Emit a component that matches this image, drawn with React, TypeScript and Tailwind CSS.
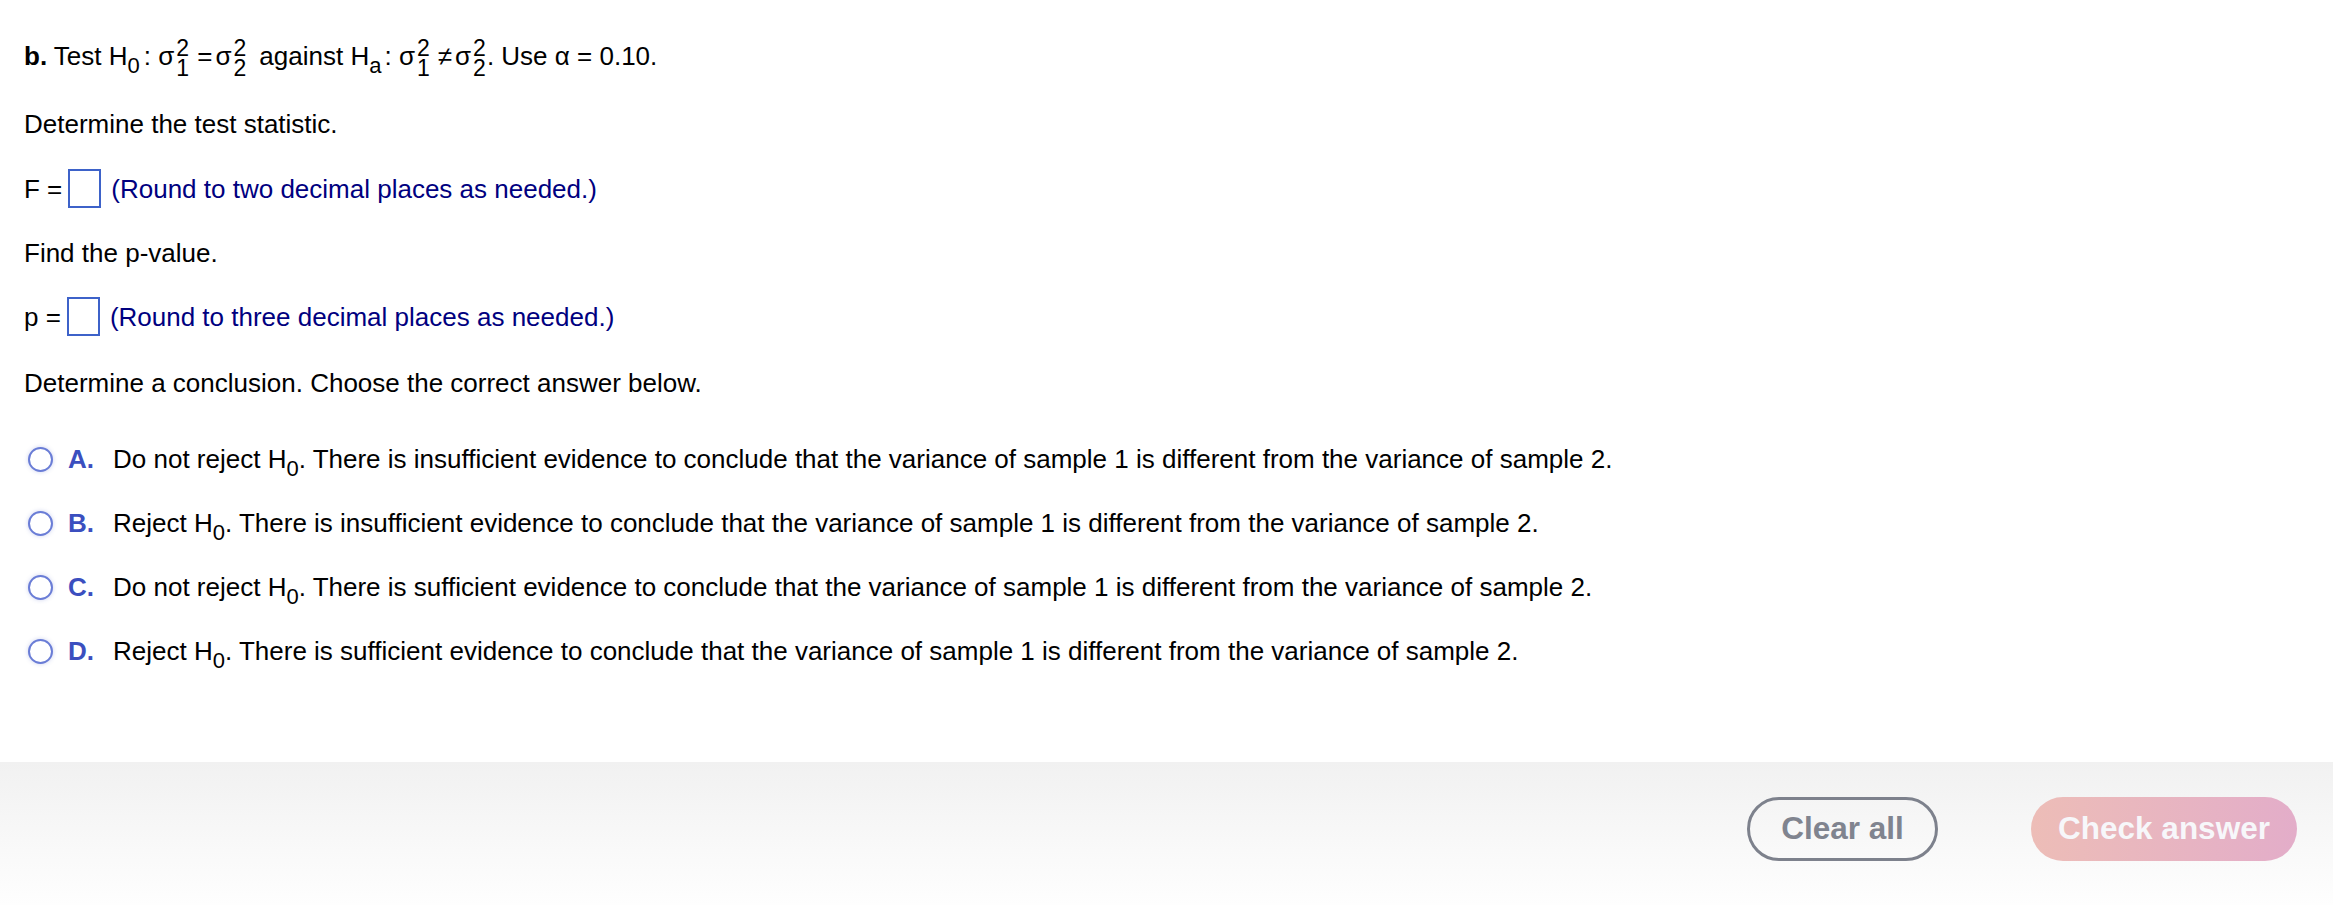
import React from "react";

const options = [
  { key: "A", verdict: "Do not reject", evidence: "insufficient" },
  { key: "B", verdict: "Reject", evidence: "insufficient" },
  { key: "C", verdict: "Do not reject", evidence: "sufficient" },
  { key: "D", verdict: "Reject", evidence: "sufficient" },
];

function Sub({ children }: { children: React.ReactNode }) {
  return <span className="text-[22px] align-[-8px] leading-none">{children}</span>;
}

// superscript stacked over subscript, like sigma squared sub 1
function Stack({ sup, sub }: { sup: string; sub: string }) {
  return (
    <span className="inline-flex flex-col align-middle text-[23px] leading-[20px] ml-[2px] mr-[1px]">
      <span>{sup}</span>
      <span>{sub}</span>
    </span>
  );
}

function AnswerBox() {
  return (
    <span className="inline-block w-[33px] h-[39px] border-2 border-[#3d62c9] align-[-10px] ml-[6px] mr-[10px] bg-white" />
  );
}

function Radio() {
  return (
    <span className="block w-[25px] h-[25px] rounded-full border-[2.5px] border-[#6a7dd6] bg-white shadow-[0_0_4px_rgba(60,80,190,0.25)]" />
  );
}

export default function App() {
  return (
    <div
      className="flex flex-col h-[905px] bg-white text-black"
      style={{ fontFamily: '"Liberation Sans", Arial, sans-serif' }}
    >
      <div className="flex-1 pl-[24px] pt-[24px] text-[26px]">
        <div className="leading-[64px] whitespace-nowrap">
          <b>b.</b> Test H<Sub>0</Sub>
          <span className="ml-[4px]">: σ</span>
          <Stack sup="2" sub="1" /> =<span className="ml-[3px]">σ</span>
          <Stack sup="2" sub="2" />
          <span className="ml-[12px]">against H</span>
          <Sub>a</Sub>
          <span className="ml-[3px]">: σ</span>
          <Stack sup="2" sub="1" />
          <span className="inline-block ml-[7px] mr-[3px]">≠</span>
          <span>σ</span>
          <Stack sup="2" sub="2" />
          <span>. Use α = 0.10.</span>
        </div>
        <div className="leading-[64px] mt-[4px]">Determine the test statistic.</div>
        <div className="leading-[64px] mt-[1px]">
          F =<AnswerBox />
          <span className="text-[#00007f]">(Round to two decimal places as needed.)</span>
        </div>
        <div className="leading-[64px]">Find the p-value.</div>
        <div className="leading-[64px]">
          p =<AnswerBox />
          <span className="text-[#00007f]">(Round to three decimal places as needed.)</span>
        </div>
        <div className="leading-[64px] mt-[2px]">Determine a conclusion. Choose the correct answer below.</div>

        <div className="mt-[12px] flex flex-col">
          {options.map((o) => (
            <div key={o.key} className="flex items-center h-[64px] leading-[64px] whitespace-nowrap">
              <span className="ml-[4px]">
                <Radio />
              </span>
              <span className="ml-[15px] w-[45px] font-bold text-[#3b4fbf]">{o.key}.</span>
              <span>
                {o.verdict} H<Sub>0</Sub>. There is {o.evidence} evidence to conclude that the variance of
                sample 1 is different from the variance of sample 2.
              </span>
            </div>
          ))}
        </div>
      </div>

      <div className="h-[143px] bg-gradient-to-b from-[#f1f1f1] to-[#fefefe] flex justify-end items-start pt-[35px] pr-[36px] gap-[93px]">
        <button className="w-[191px] h-[64px] rounded-full border-[3px] border-[#7d818c] text-[31.5px] font-bold text-[#80848f] leading-none">
          Clear all
        </button>
        <button className="w-[266px] h-[64px] rounded-full bg-gradient-to-r from-[#edbdb7] to-[#e3adc9] text-[31.5px] font-bold text-[#f7f7fa] leading-none">
          Check answer
        </button>
      </div>
    </div>
  );
}
